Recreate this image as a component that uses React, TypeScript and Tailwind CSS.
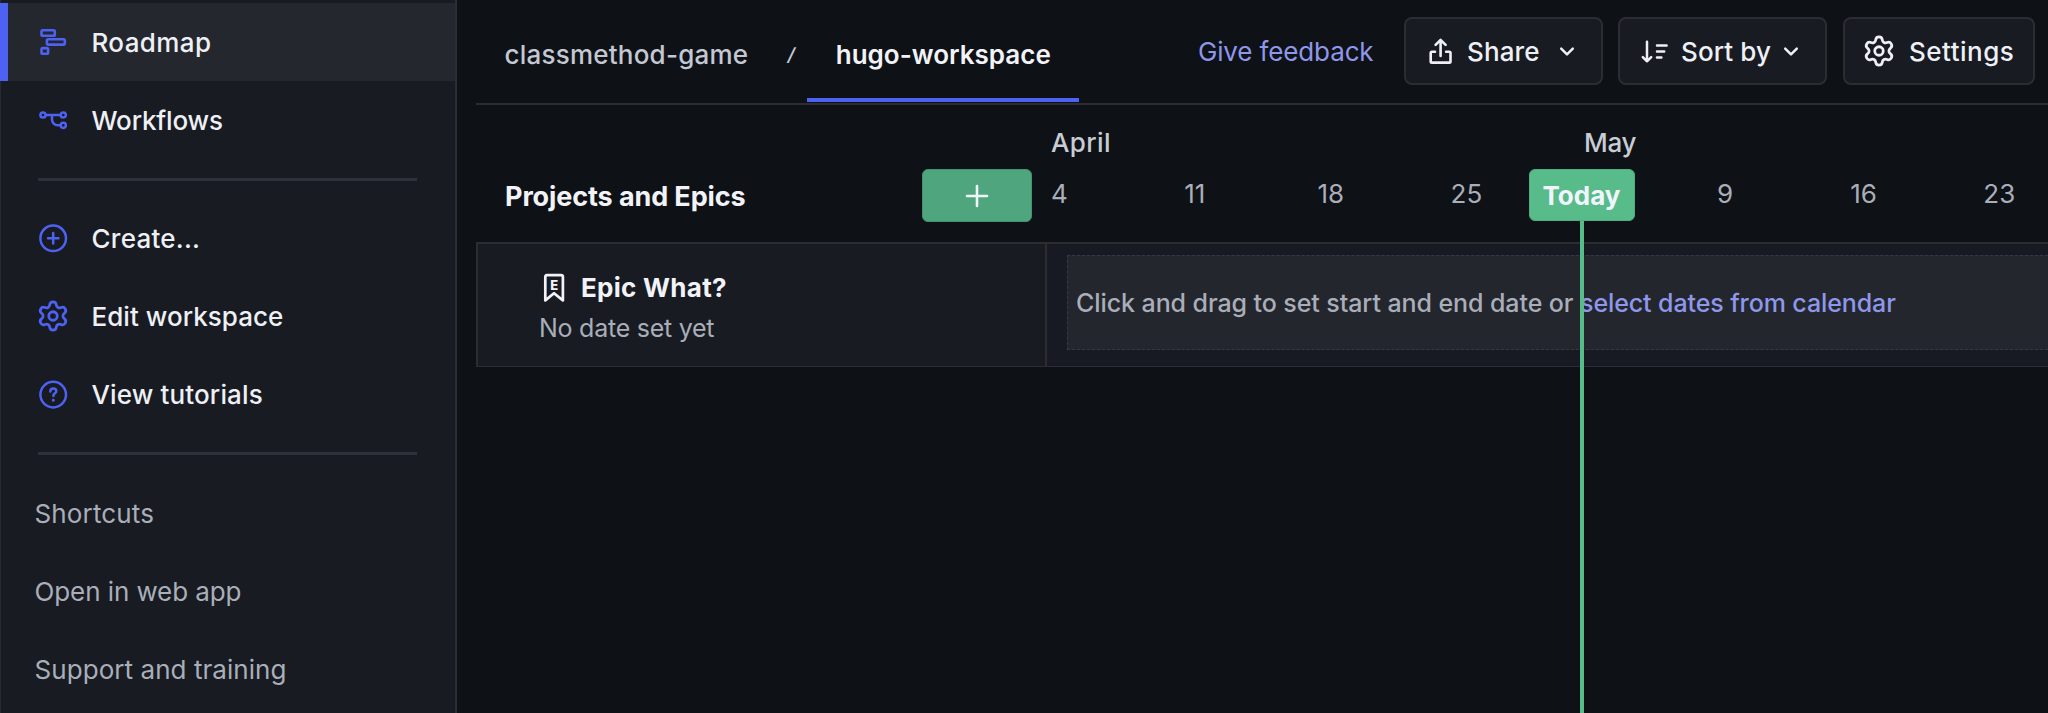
import React from "react";
import { Settings } from "lucide-react";

const RoadmapIcon = () => (
	<svg className="h-[28px] w-[28px]" viewBox="0 0 28 28" fill="none" stroke="currentColor" strokeWidth="2.6">
		<rect x="2.5" y="2.3" width="13.3" height="5.4" rx="1.3" />
		<rect x="7.9" y="11.2" width="17.9" height="5.4" rx="1.3" />
		<rect x="2.5" y="20.1" width="6.6" height="5.6" rx="1.3" />
	</svg>
);

const WorkflowIcon = () => (
	<svg className="h-[28px] w-[28px]" viewBox="0 0 28 28" fill="none" stroke="currentColor" strokeWidth="2.5">
		<circle cx="4" cy="9" r="2.6" />
		<circle cx="24.3" cy="9" r="2.6" />
		<circle cx="24.3" cy="19.3" r="2.6" />
		<path d="M6.7 9h14.9M13 9v4.5a5.8 5.8 0 0 0 5.8 5.8h2.8" />
	</svg>
);

const CreateIcon = () => (
	<svg className="h-[28px] w-[28px] overflow-visible" viewBox="0 0 28 28" fill="none" stroke="currentColor" strokeWidth="2.5" strokeLinecap="round">
		<circle cx="14.2" cy="14.3" r="12.8" />
		<path d="M14.2 9.1v10.4M9 14.3h10.4" />
	</svg>
);

const GearIcon = () => <Settings className="-mx-[3px] h-[34px] w-[34px] shrink-0" strokeWidth={1.95} />;

const HelpIcon = () => (
	<svg className="h-[28px] w-[28px] overflow-visible" viewBox="0 0 28 28" fill="none" stroke="currentColor" strokeWidth="2.5" strokeLinecap="round">
		<circle cx="14.2" cy="14.6" r="12.8" />
		<path d="M11.3 11.6c0-1.9 1.2-3.1 3-3.1 1.7 0 3 1 3 2.7 0 2-2.9 2.2-2.9 4.4v.4" />
		<path d="M14.3 20.3v.1" strokeWidth="2.9" />
	</svg>
);

const ShareIcon = () => (
	<svg className="h-[27px] w-[23px]" viewBox="0 0 23 27" fill="none" stroke="currentColor" strokeWidth="2.6" strokeLinecap="round" strokeLinejoin="round">
		<path d="M6 13.7H2.9a1.2 1.2 0 0 0-1.2 1.2v8.5a1.2 1.2 0 0 0 1.2 1.2h17.4a1.2 1.2 0 0 0 1.2-1.2v-8.5a1.2 1.2 0 0 0-1.2-1.2h-3.2" />
		<path d="M11.6 18V2M6.6 6.8l5-5 5 5" />
	</svg>
);

const SortIcon = () => (
	<svg className="mt-[2px] h-[24px] w-[28px]" viewBox="0 0 28 24" fill="none" stroke="currentColor" strokeWidth="2.5" strokeLinecap="round" strokeLinejoin="round">
		<path d="M6 1.8v19.4M1.8 17.2L6 21.3l4.2-4.1" />
		<path d="M16 5.6h9.6M16 11.5h7.2M16 17.4h4.4" />
	</svg>
);

const ChevronIcon = () => (
	<svg className="mt-px h-[11px] w-[16px]" viewBox="0 0 16 11" fill="none" stroke="currentColor" strokeWidth="2.5" strokeLinecap="round" strokeLinejoin="round">
		<path d="M2.2 2.6L8 8.4l5.8-5.8" />
	</svg>
);

const EpicIcon = () => (
	<svg className="h-[30px] w-[22px]" viewBox="0 0 22 30" fill="none">
		<path
			d="M4 2.2h14a1.9 1.9 0 0 1 1.9 1.9v23.3L11 20.2l-8.7 7.2V4.1A1.9 1.9 0 0 1 4 2.2z"
			stroke="currentColor"
			strokeWidth="2.7"
			strokeLinejoin="round"
		/>
		<text x="11.2" y="17" textAnchor="middle" className="fill-current font-['Inter',sans-serif] text-[13px] font-extrabold">
			E
		</text>
	</svg>
);

const mainLinks = [
	{ label: "Roadmap", icon: <RoadmapIcon />, active: true, tracking: "tracking-[0.38px]" },
	{ label: "Workflows", icon: <WorkflowIcon />, active: false, tracking: "tracking-[-0.15px]" },
];

const actionLinks = [
	{ label: "Create...", icon: <CreateIcon />, active: false, tracking: "tracking-[0.25px]" },
	{ label: "Edit workspace", icon: <GearIcon />, active: false, tracking: "tracking-[0.04px]" },
	{ label: "View tutorials", icon: <HelpIcon />, active: false, tracking: "tracking-[0.14px]" },
];

const footerLinks = [
	{ label: "Shortcuts", tracking: "tracking-[0.14px]" },
	{ label: "Open in web app", tracking: "tracking-[-0.09px]" },
	{ label: "Support and training", tracking: "tracking-[0.06px]" },
];

const weeks = ["4", "11", "18", "25", "", "9", "16", "23"];

const SidebarItem = ({ label, icon, active, tracking }: (typeof mainLinks)[number]) => (
	<a
		className={`-ml-px flex h-[78px] items-center border-l-8 pl-[31px] font-medium text-[#eef0f5] ${
			active ? "border-[#4d61f3] bg-[#24272e]" : "border-transparent"
		}`}
	>
		<span className="flex w-[28px] justify-center text-[#4d61f3]">{icon}</span>
		<span className={`ml-[24.5px] pt-[2px] ${tracking}`}>{label}</span>
	</a>
);

const Divider = () => <div className="ml-[37px] h-[3px] w-[379px] bg-[#2e3139]" />;

const Sidebar = () => (
	<aside className="flex w-[457px] shrink-0 flex-col border-r-2 border-l border-r-[#2b2d33] border-l-[#272a31] bg-[#181b22] pt-[3px]">
		{mainLinks.map((link) => (
			<SidebarItem key={link.label} {...link} />
		))}
		<div className="pt-[19px] pb-[18px]">
			<Divider />
		</div>
		{actionLinks.map((link) => (
			<SidebarItem key={link.label} {...link} />
		))}
		<div className="pt-[19px] pb-[19px]">
			<Divider />
		</div>
		{footerLinks.map((link) => (
			<a key={link.label} className={`flex h-[78px] items-center pt-px pl-[33.5px] text-[#a9aeb9] ${link.tracking}`}>
				{link.label}
			</a>
		))}
	</aside>
);

const Header = () => (
	<header className="flex h-[105px] items-center border-b-2 border-[#2b2d33] pr-[13px] font-medium">
		<span className="ml-[28.5px] pt-[6px] tracking-[0.22px] text-[#c3c8d2]">classmethod-game</span>
		<span className="ml-[38px] w-[12px] -skew-x-12 pt-[6px] text-center text-[18px] font-semibold text-[#c3c8d2]">/</span>
		<div className="ml-[9px] flex h-full w-[272px] flex-col">
			<span className="flex h-[98px] items-center justify-center pt-[12px] font-semibold text-[#f1f3f8]">
				hugo-workspace
			</span>
			<span className="h-[4px] bg-[#4d61f3]" />
		</div>

		<div className="ml-auto flex items-center pb-px text-[#eef0f5]">
			<a className="mr-[30.5px] pt-[2px] font-normal tracking-[-0.13px] text-[#8f97ea]">Give feedback</a>
			<button className="mr-[15px] flex h-[68px] w-[199px] items-center rounded-lg border-2 border-[#2b2d33] bg-[#181b22] pl-[23px]">
				<ShareIcon />
				<span className="ml-[15px] w-[92px] pt-[2px] text-left tracking-[0.13px]">Share</span>
				<ChevronIcon />
			</button>
			<button className="mr-[16px] flex h-[68px] w-[209px] items-center rounded-lg border-2 border-[#2b2d33] bg-[#181b22] pl-[21px]">
				<SortIcon />
				<span className="ml-[12px] w-[102px] pt-[2px] text-left tracking-[0.11px]">Sort by</span>
				<ChevronIcon />
			</button>
			<button className="flex h-[68px] w-[192px] items-center rounded-lg border-2 border-[#2b2d33] bg-[#181b22] pl-[20px]">
				<GearIcon />
				<span className="ml-[16px] pt-[2px] tracking-[0.5px]">Settings</span>
			</button>
		</div>
	</header>
);

const TimelineHeader = () => (
	<div className="flex h-[137px]">
		<div className="flex w-[574px] shrink-0 items-start justify-between pt-[64px] pr-[18px] pl-[29px]">
			<h2 className="text-[27px] leading-[55px] font-bold tracking-[-0.11px] text-[#f1f3f8]">Projects and Epics</h2>
			<button className="flex h-[53px] w-[110px] items-center justify-center rounded-md border border-[#45936f] bg-[#4fa67e]">
				<svg className="h-[24px] w-[24px]" viewBox="0 0 24 24" stroke="#f1f5f5" strokeWidth="2.6" strokeLinecap="round">
					<path d="M12 2v20M2 12h20" />
				</svg>
			</button>
		</div>
		<div className="flex min-w-0 flex-1 flex-col pt-[18px] pl-px">
			<div className="flex h-[40px] items-center font-medium text-[#c8ccd5]">
				<span className="w-[533px] shrink-0 tracking-[0.39px]">April</span>
				<span className="tracking-[-0.24px]">May</span>
			</div>
			<div className="mt-[11px] flex h-[40px] items-center text-[#a9aeb9]">
				{weeks.map((week, i) => (
					<span key={i} className="w-[133.2px] shrink-0">
						{week}
					</span>
				))}
			</div>
		</div>
	</div>
);

const EpicRow = () => (
	<div className="flex h-[125px] border-t-2 border-b border-l-2 border-[#2b2d33] bg-[#181b22]">
		<div className="flex w-[569px] shrink-0 flex-col justify-center border-r-2 border-[#2b2d33] pt-[5px] pl-[61px]">
			<div className="flex h-[40px] items-center gap-[15px] pl-[4px] font-bold text-[#f1f3f8]">
				<EpicIcon />
				<span className="ml-px tracking-[0.28px]">Epic What?</span>
			</div>
			<span className="text-[25px] leading-[40px] tracking-[-0.25px] text-[#a9aeb9]">No date set yet</span>
		</div>
		<div className="flex min-w-0 flex-1 bg-[#171a22] pt-[11px] pb-[16px] pl-[20px]">
			<div className="flex flex-1 items-center border border-r-0 border-dashed border-[#363940] bg-[#23262d] pl-[8px] text-[25px] font-medium tracking-[-0.08px] whitespace-pre text-[#a9aeb9]">
				Click and drag to set start and end date or{" "}
				<a className="tracking-[-0.1px] text-[#8f97ea]">select dates from calendar</a>
			</div>
		</div>
	</div>
);

// Marker that hangs over the timeline at the current date
const TodayMarker = () => (
	<div className="absolute top-[169px] bottom-0 left-[1072px] flex w-[106px] flex-col items-center">
		<span className="flex h-[52px] w-full shrink-0 items-center justify-center rounded-md border border-[#4fae7f] bg-[#57bc8a] pt-px pr-px font-bold text-[#f1f5fb]">
			Today
		</span>
		<span className="w-[4px] flex-1 bg-[#57bc8a]" />
	</div>
);

const App = () => {
	return (
		<div className="flex h-screen overflow-hidden bg-[#0e1116] font-['Inter',sans-serif] text-[26px] leading-[40px] whitespace-nowrap">
			<Sidebar />
			<main className="relative min-w-0 flex-1 pl-[19px]">
				<Header />
				<TimelineHeader />
				<EpicRow />
				<TodayMarker />
			</main>
		</div>
	);
};

export default App;
